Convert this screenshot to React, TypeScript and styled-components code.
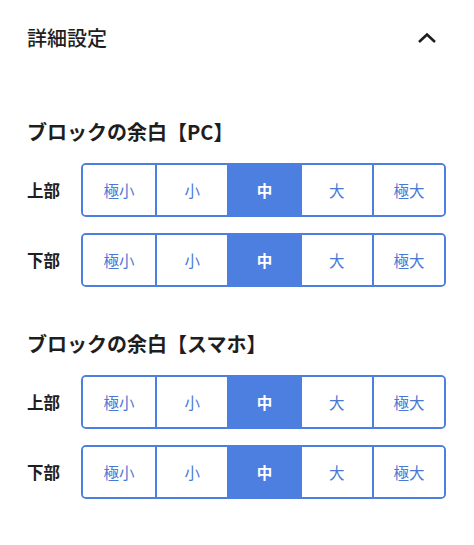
import React, { useState } from "react";
import styled, { createGlobalStyle } from "styled-components";

const Global = createGlobalStyle`
  html, body { margin: 0; padding: 0; background: #fff; }
  body { font-family: "Noto Sans CJK JP", "Noto Sans", sans-serif; color: #1e1e1e; }
`;

const BLUE = "#4d7fe1";

const Panel = styled.div`
  padding: 0 28px 0 27px;
  width: 474px;
  box-sizing: border-box;
`;

const Header = styled.div`
  height: 76px;
  display: flex;
  align-items: center;
  justify-content: space-between;
`;

const HeaderTitle = styled.div`
  font-size: 20px;
  font-weight: 500;
  line-height: 24px;
`;

const Chevron = styled.svg`
  width: 20px;
  height: 12px;
  margin-right: 9px;
`;

const Section = styled.section<{ $top: number }>`
  margin-top: ${(p) => p.$top}px;
  display: flex;
  flex-direction: column;
  gap: 16px;
`;

const SectionTitle = styled.div`
  font-size: 20px;
  font-weight: 700;
  line-height: 24px;
  margin-bottom: 3px;
`;

const Row = styled.div`
  display: flex;
  align-items: center;
`;

const RowLabel = styled.div`
  width: 54px;
  flex: none;
  font-size: 16.5px;
  font-weight: 700;
  line-height: 20px;
`;

const Group = styled.div`
  flex: 1;
  display: grid;
  grid-template-columns: repeat(5, 1fr);
  height: 54px;
  border: 2px solid ${BLUE};
  border-radius: 5px;
  overflow: hidden;
  box-sizing: border-box;
`;

const Option = styled.button<{ $active: boolean }>`
  border: none;
  border-left: 2px solid ${BLUE};
  &:first-child { border-left: none; }
  background: ${(p) => (p.$active ? BLUE : "#fff")};
  color: ${(p) => (p.$active ? "#fff" : "#4a78d6")};
  font-family: inherit;
  font-size: 15.5px;
  font-weight: ${(p) => (p.$active ? 700 : 400)};
  padding: 0;
  cursor: pointer;
`;

const OPTIONS = ["極小", "小", "中", "大", "極大"];

function Segmented() {
  const [v, setV] = useState(2);
  return (
    <Group>
      {OPTIONS.map((o, i) => (
        <Option key={o} $active={v === i} onClick={() => setV(i)}>
          {o}
        </Option>
      ))}
    </Group>
  );
}

function SpacingSection({ title, top }: { title: string; top: number }) {
  return (
    <Section $top={top}>
      <SectionTitle>{title}</SectionTitle>
      <Row>
        <RowLabel>上部</RowLabel>
        <Segmented />
      </Row>
      <Row>
        <RowLabel>下部</RowLabel>
        <Segmented />
      </Row>
    </Section>
  );
}

export default function App() {
  return (
    <Panel>
      <Global />
      <Header>
        <HeaderTitle>詳細設定</HeaderTitle>
        <Chevron viewBox="0 0 20 12">
          <path d="M2 10 L10 2.5 L18 10" fill="none" stroke="#1e1e1e" strokeWidth="2.6" />
        </Chevron>
      </Header>
      <SpacingSection title="ブロックの余白【PC】" top={44} />
      <SpacingSection title="ブロックの余白【スマホ】" top={45} />
    </Panel>
  );
}
